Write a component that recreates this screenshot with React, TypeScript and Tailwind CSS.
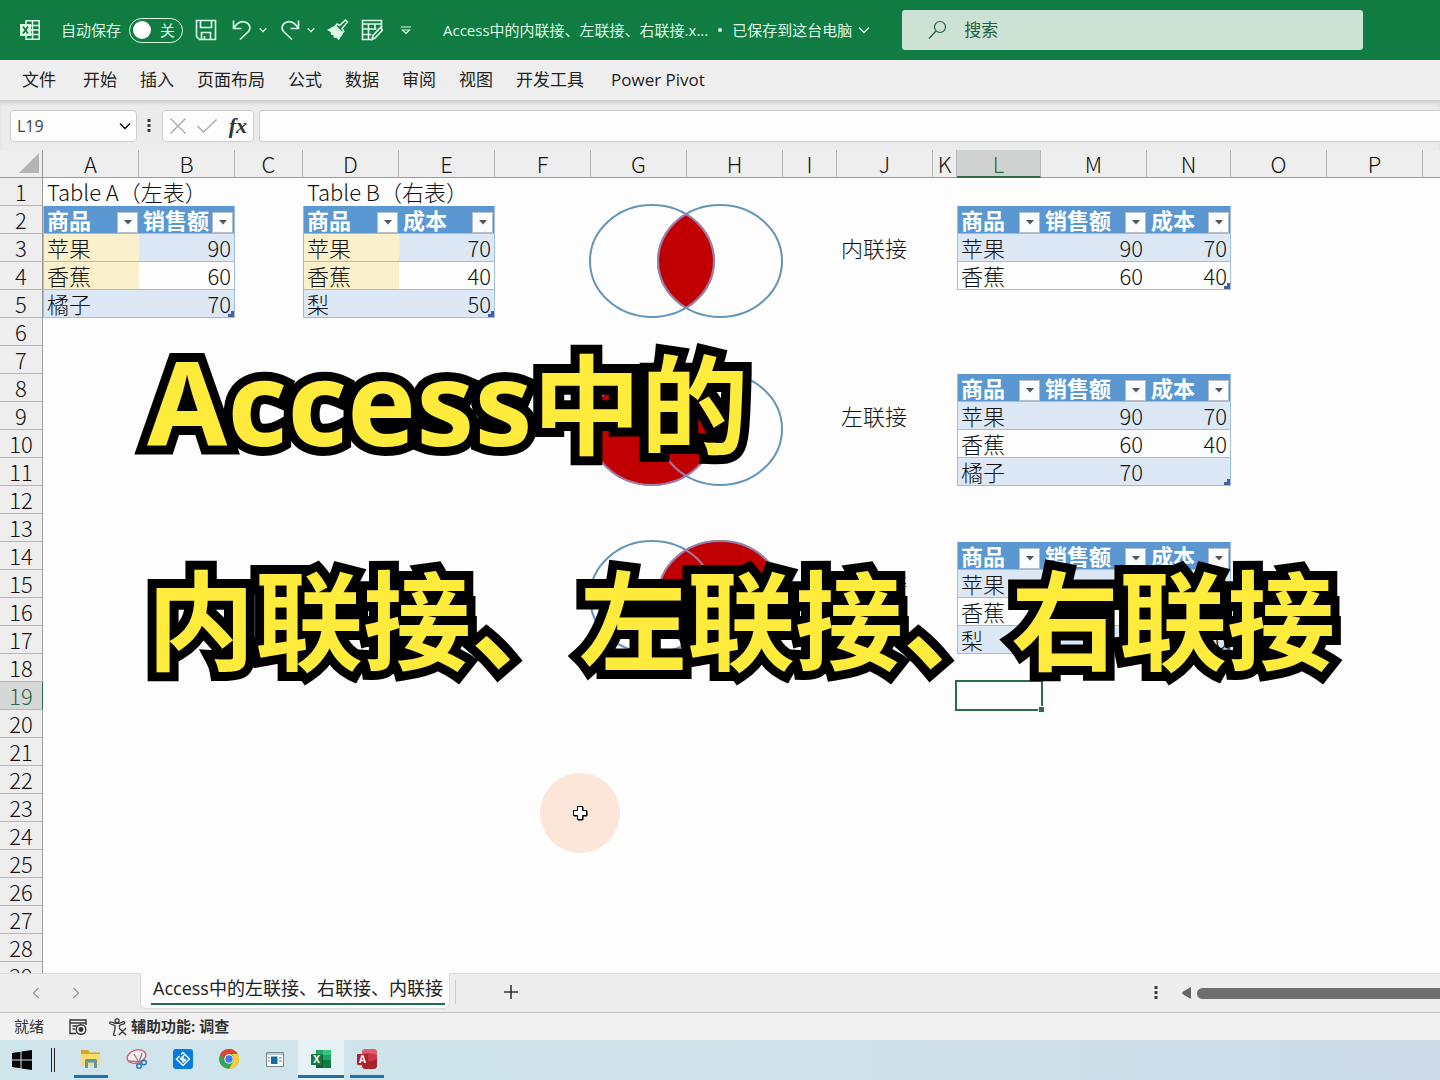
import clsx from "clsx";
import { ReactNode } from "react";

type CellKind = "text" | "head" | "band" | "plain" | "mark";

interface Cell {
  value: string;
  kind: CellKind;
  first?: boolean;
  last?: boolean;
  corner?: boolean;
}

const columns = [
  { name: "A", width: "w-[96px]" },
  { name: "B", width: "w-[96px]" },
  { name: "C", width: "w-[68px]" },
  { name: "D", width: "w-[96px]" },
  { name: "E", width: "w-[96px]" },
  { name: "F", width: "w-[96px]" },
  { name: "G", width: "w-[96px]" },
  { name: "H", width: "w-[96px]" },
  { name: "I", width: "w-[54px]" },
  { name: "J", width: "w-[96px]" },
  { name: "K", width: "w-[24px]" },
  { name: "L", width: "w-[84px]" },
  { name: "M", width: "w-[106px]" },
  { name: "N", width: "w-[84px]" },
  { name: "O", width: "w-[96px]" },
  { name: "P", width: "w-[96px]" },
  { name: "", width: "" },
];

const rowNumbers = Array.from({ length: 30 }, (_, i) => i + 1);

const cells: Record<string, Cell> = {
  A1: { value: "Table A（左表）", kind: "text" },
  D1: { value: "Table B（右表）", kind: "text" },
  J3: { value: "内联接", kind: "text" },
  J9: { value: "左联接", kind: "text" },
  J15: { value: "右联接", kind: "text" },
};

const addTable = (cols: string[], top: number, rows: string[][], marked = false) => {
  rows.forEach((row, r) => {
    row.forEach((value, c) => {
      let kind: CellKind = r === 0 ? "head" : r % 2 === 1 ? "band" : "plain";
      if (marked && c === 0 && (r === 1 || r === 2)) kind = "mark";
      cells[`${cols[c]}${top + r}`] = {
        value,
        kind,
        first: c === 0,
        last: c === row.length - 1,
        corner: c === row.length - 1 && r === rows.length - 1,
      };
    });
  });
};

addTable(["A", "B"], 2, [["商品", "销售额"], ["苹果", "90"], ["香蕉", "60"], ["橘子", "70"]], true);
addTable(["D", "E"], 2, [["商品", "成本"], ["苹果", "70"], ["香蕉", "40"], ["梨", "50"]], true);
addTable(["L", "M", "N"], 2, [["商品", "销售额", "成本"], ["苹果", "90", "70"], ["香蕉", "60", "40"]]);
addTable(["L", "M", "N"], 8, [
  ["商品", "销售额", "成本"],
  ["苹果", "90", "70"],
  ["香蕉", "60", "40"],
  ["橘子", "70", ""],
]);
addTable(["L", "M", "N"], 14, [
  ["商品", "销售额", "成本"],
  ["苹果", "90", "70"],
  ["香蕉", "60", "40"],
  ["梨", "", "50"],
]);

const menus = ["开始", "插入", "页面布局", "公式", "数据", "审阅", "视图", "开发工具"];

const Chevron = ({ className }: { className?: string }) => (
  <svg viewBox="0 0 12 8" className={className} fill="none" stroke="currentColor" strokeWidth="1.3">
    <path d="M1 1.5 6 6.5 11 1.5" />
  </svg>
);

const Dots = () => (
  <svg viewBox="0 0 4 14" className="h-3.5 w-1 shrink-0" fill="#3b3b3b">
    <rect x="0.5" y="0" width="3" height="3" />
    <rect x="0.5" y="5" width="3" height="3" />
    <rect x="0.5" y="10" width="3" height="3" />
  </svg>
);

// Two overlapping circles with the joined part filled in
const Venn = ({ join }: { join: "inner" | "left" | "right" }) => (
  <svg viewBox="0 0 196 116" className="absolute -left-1 -top-1 z-10 h-[116px] w-[196px]">
    <g fill="none" stroke="#6495b8" strokeWidth="2">
      <ellipse cx="65" cy="59" rx="62" ry="56" />
      <ellipse cx="133" cy="59" rx="62" ry="56" />
    </g>
    <g fill="#c00000" stroke="#9c7fa8" strokeWidth="2">
      {join === "left" && <ellipse cx="65" cy="59" rx="62" ry="56" />}
      {join === "right" && <ellipse cx="133" cy="59" rx="62" ry="56" />}
      {join === "inner" && <path d="M99 12.2A62 56 0 0 1 99 105.8A62 56 0 0 1 99 12.2Z" />}
      {join === "left" && <path d="M99 12.2A62 56 0 0 0 99 105.8" fill="none" />}
      {join === "right" && <path d="M99 12.2A62 56 0 0 1 99 105.8" fill="none" />}
    </g>
  </svg>
);

const venns: Record<string, "inner" | "left" | "right"> = { G2: "inner", G8: "left", G14: "right" };

const SheetCell = ({ id, cell }: { id: string; cell?: Cell }) => {
  const isNumber = cell ? /^\d+$/.test(cell.value) : false;
  return (
    <td
      className={clsx(
        "relative h-7 whitespace-nowrap pb-0.5 pt-0 leading-6",
        isNumber && "text-right",
        cell && cell.kind !== "text" && "border-b border-[#9bbfdf]",
        cell?.kind === "head" && "bg-[#5b97d1] font-bold text-white",
        cell?.kind === "band" && "bg-[#dce8f5]",
        cell?.kind === "mark" && "bg-[#fbf0cc]",
        cell?.first ? "border-l pl-[3px]" : "pl-1",
        cell?.last ? "border-r pr-[3px]" : "pr-1"
      )}
    >
      {cell?.value}
      {cell?.kind === "head" && (
        <button
          aria-label={`筛选 ${cell.value}`}
          className="absolute bottom-0 right-px flex size-[21px] items-center justify-center border border-[#b5bdc6] bg-[#fbfcfd]"
        >
          <svg viewBox="0 0 8 5" className="h-[5px] w-2" fill="#555">
            <path d="M0 0h8L4 4.5Z" />
          </svg>
        </button>
      )}
      {cell?.corner && (
        <svg viewBox="0 0 6 6" className="absolute bottom-0 right-0 size-1.5" fill="#4a5f9e">
          <path d="M3 0h3v6H0V3h3Z" />
        </svg>
      )}
      {venns[id] && <Venn join={venns[id]} />}
      {id === "L19" && (
        <div className="absolute -inset-x-0.5 -bottom-px -top-0.5 border-2 border-[#2b6b4b]">
          <span className="absolute -bottom-[3px] -right-[3px] size-1.5 border-l border-t border-white bg-[#2b6b4b]" />
        </div>
      )}
    </td>
  );
};

const Sheet = () => (
  <main className="min-h-0 flex-1 overflow-hidden bg-[#fdfdfd] font-['Noto_Sans_CJK_SC',sans-serif] text-[22px] font-light text-[#111]">
    <table className="w-full table-fixed border-separate border-spacing-0">
      <colgroup>
        <col className="w-[43px]" />
        {columns.map((c) => (
          <col key={c.name} className={c.width} />
        ))}
      </colgroup>
      <thead>
        <tr>
          <th className="relative h-7 border-b border-r border-[#9a9a9a] bg-[#eeeeee] p-0">
            <svg viewBox="0 0 20 20" className="absolute bottom-1 right-[3px] size-5" fill="#b4b4b4">
              <path d="M20 0v20H0Z" />
            </svg>
          </th>
          {columns.map((c) => (
            <th
              key={c.name}
              className={clsx(
                "h-7 px-0 pt-0 font-light leading-6",
                c.name && "border-r",
                c.name === "L"
                  ? "border-b-2 border-b-[#2b6b4b] border-r-[#b5b5b5] bg-[#d0d2d2] pb-px text-[#2b6b4b]"
                  : "border-b border-b-[#9a9a9a] border-r-[#b5b5b5] bg-[#eeeeee] pb-0.5"
              )}
            >
              {c.name}
            </th>
          ))}
        </tr>
      </thead>
      <tbody>
        {rowNumbers.map((n) => (
          <tr key={n}>
            <th
              className={clsx(
                "h-7 border-b border-r px-0 pb-0.5 pt-0 font-light leading-6",
                n === 19
                  ? "border-b-[#b5b5b5] border-r-[#2b6b4b] bg-[#d6d8d8] text-[#2b6b4b]"
                  : "border-b-[#b5b5b5] border-r-[#9a9a9a] bg-[#eeeeee]"
              )}
            >
              {n}
            </th>
            {columns.map((c) => (
              <SheetCell key={c.name} id={`${c.name}${n}`} cell={cells[`${c.name}${n}`]} />
            ))}
          </tr>
        ))}
      </tbody>
    </table>
  </main>
);

const TitleBar = () => (
  <header className="flex h-[60px] shrink-0 items-center bg-[#107c41] pl-5 text-[15px] text-[#dcfbe8]">
    <svg viewBox="0 0 20 20" className="size-5 shrink-0">
      <path d="M6 .8h13.2v18.4H6ZM6 5.4h13M6 10h13M6 14.6h13M12.5 1v18" fill="none" stroke="#dcfbe8" strokeWidth="1.5" />
      <rect y="4" width="11" height="12" fill="#dcfbe8" />
      <path d="m3 6.5 5 7M8 6.5l-5 7" stroke="#107c41" strokeWidth="1.8" />
    </svg>
    <label className="ml-[21px] flex shrink-0 items-center gap-2">
      自动保存
      <input type="checkbox" className="sr-only" />
      <span className="flex h-[25px] w-[54px] items-center justify-between rounded-full border border-current pl-[3px] pr-[7px]">
        <span className="size-[18px] rounded-full bg-white" />
        关
      </span>
    </label>
    <button aria-label="保存" className="ml-3">
      <svg viewBox="0 0 22 22" className="size-[22px]" fill="none" stroke="currentColor" strokeWidth="1.6">
        <path d="M1.5 1.5h19v19h-16l-3-3ZM5.5 1.5v7h11v-7M6.5 20.5v-7h9v7M9.5 17v3.5" />
      </svg>
    </button>
    <button aria-label="撤消" className="ml-3.5 flex items-center gap-1.5">
      <svg viewBox="0 0 22 22" className="size-[22px]" fill="none" stroke="currentColor" strokeWidth="1.6">
        <path d="M2.5 1.5v8h8M2.5 9.5C6 4 10 1.8 14 3c5 1.5 6.5 6.500 3 10L9 20.500" />
      </svg>
      <Chevron className="h-[6px] w-2 [stroke-width:2]" />
    </button>
    <button aria-label="恢复" className="ml-3 flex items-center gap-1.5">
      <svg viewBox="0 0 22 22" className="size-[22px]" fill="none" stroke="currentColor" strokeWidth="1.6">
        <path d="M19.5 1.5v8h-8M19.5 9.5C16 4 12 1.8 8 3c-5 1.5-6.500 6.500-3 10l8 7.500" />
      </svg>
      <Chevron className="h-[6px] w-2 [stroke-width:2]" />
    </button>
    <button aria-label="格式刷" className="ml-3">
      <svg viewBox="0 0 22 22" className="size-[22px]" fill="none" stroke="currentColor" strokeWidth="1.5">
        <path d="m8 6.5 7.5 7.5M10 5l2.5 1.5L18.5 1l2 2L15 9.5l1.8 2.800-2 2.200L8 7.500Z" />
        <path d="M7 8 1.500 11l3 1.500v2.500l2.500.5.500 2.500H10l1.500 2L15 15Z" fill="currentColor" />
      </svg>
    </button>
    <button aria-label="编辑表格" className="ml-3">
      <svg viewBox="0 0 22 22" className="size-[22px]" fill="none" stroke="currentColor" strokeWidth="1.6">
        <path d="M20.5 9V1.500h-19v19h9M1.500 5h19M1.500 10h14M1.500 15.500h9M7.500 5v15.500M14 5v6M11 20.500l1-4 7.500-8 2 2.500-7.500 8Z" />
      </svg>
    </button>
    <button aria-label="自定义快速访问工具栏" className="ml-[18px]">
      <svg viewBox="0 0 10 9" className="h-[9px] w-2.5" fill="none" stroke="currentColor" strokeWidth="1.2">
        <path d="M0 1h10M1.5 4 5 7.5 8.500 4Z" />
      </svg>
    </button>
    <button className="ml-8 flex shrink-0 items-center whitespace-nowrap">
      Access中的内联接、左联接、右联接.x...
      <span className="mx-2.5 size-1 rounded-full bg-current" />
      已保存到这台电脑
      <Chevron className="ml-1.5 h-2 w-3" />
    </button>
    <label className="ml-8 mr-[77px] flex h-10 flex-1 items-center gap-4 rounded-[3px] bg-[#cbe2d5] pl-[26px] text-[17px] text-[#21603f]">
      <svg viewBox="0 0 20 20" className="size-5 shrink-0" fill="none" stroke="currentColor" strokeWidth="1.2">
        <circle cx="12" cy="7" r="5.5" />
        <path d="m8 11-7 7.500" />
      </svg>
      <input
        type="search"
        aria-label="搜索"
        placeholder="搜索"
        className="min-w-0 flex-1 bg-transparent outline-none placeholder:text-[#21603f]"
      />
    </label>
  </header>
);

const FormulaBar = () => (
  <div className="flex h-[50px] shrink-0 items-center bg-[#ebebeb] pl-2.5 pt-0.5 shadow-[inset_0_4px_4px_-2px_#c4c4c4]">
    <div className="flex h-8 w-[127px] items-center rounded border border-[#cfcfcf] bg-[#fdfdfd] pl-1.5 pr-[5px]">
      <input aria-label="名称框" defaultValue="L19" className="min-w-0 flex-1 text-base text-[#444] outline-none" />
      <button aria-label="打开名称列表">
        <Chevron className="h-2 w-3" />
      </button>
    </div>
    <div className="ml-2.5 mr-[11px]">
      <Dots />
    </div>
    <div className="flex h-8 w-[92px] items-center justify-between rounded border border-[#cfcfcf] bg-[#fdfdfd] pl-[7px] pr-1.5">
      <button aria-label="取消">
        <svg viewBox="0 0 16 16" className="size-4" stroke="#a9a9a9" strokeWidth="1.3">
          <path d="m.5.5 15 15M15.500.5l-15 15" />
        </svg>
      </button>
      <button aria-label="输入">
        <svg viewBox="0 0 20 14" className="h-3.5 w-5" fill="none" stroke="#a9a9a9" strokeWidth="1.3">
          <path d="m.5 7 6 6L19.500.5" />
        </svg>
      </button>
      <button aria-label="插入函数" className="font-['Liberation_Serif',serif] text-[22px] font-bold italic leading-6 text-[#333]">
        fx
      </button>
    </div>
    <input aria-label="编辑栏" className="ml-[5px] h-8 min-w-0 flex-1 rounded-l border border-r-0 border-[#cfcfcf] bg-[#fdfdfd] px-2 outline-none" />
  </div>
);

const TabBar = () => (
  <nav className="flex h-10 shrink-0 items-start border-b border-[#c3c3c3] bg-[#ededed]">
    <div className="flex h-full flex-1 items-start border-t border-[#dcdcdc]">
      <div className="flex h-[37px] w-[140px] items-center gap-[26px] pl-[29px] text-[#9a9a9a]">
        <button aria-label="上一个工作表">
          <Chevron className="h-2 w-3.5 rotate-90" />
        </button>
        <button aria-label="下一个工作表">
          <Chevron className="h-2 w-3.5 -rotate-90" />
        </button>
      </div>
      <button className="-mt-px h-9 rounded-b-md border border-t-0 border-[#dcdcdc] bg-[#fdfdfd] pb-1 pl-2.5 pr-1">
        <span className="block whitespace-nowrap border-b-2 border-[#1f6b4a] px-0.5 text-[18px] leading-[30px] text-[#222]">
          Access中的左联接、右联接、内联接
        </span>
      </button>
      <span className="ml-[5px] mt-1.5 h-6 w-px bg-[#c8c8c8]" />
      <button aria-label="新工作表" className="ml-12 mt-[11px]">
        <svg viewBox="0 0 14 14" className="size-3.5" stroke="#333" strokeWidth="1.6">
          <path d="M7 0v14M0 7h14" />
        </svg>
      </button>
    </div>
    <div className="flex h-full w-[286px] items-center border-t border-[#dcdcdc]">
      <Dots />
      <button aria-label="向左滚动" className="ml-6">
        <svg viewBox="0 0 9 12" className="h-3 w-[9px]" fill="#666">
          <path d="M9 1v10q0 1-1 .5L.5 7Q0 6 .5 5L8 .5Q9 0 9 1Z" />
        </svg>
      </button>
      <div className="ml-1.5 h-[11px] flex-1 rounded-l-full bg-[#6e6e6e]" />
    </div>
  </nav>
);

const StatusBar = () => (
  <footer className="flex h-[27px] shrink-0 items-center bg-[#f1f1f1] pl-3.5 text-[15px] text-[#333]">
    就绪
    <svg viewBox="0 0 18 16" className="ml-[25px] h-4 w-[18px]" fill="none" stroke="#333" strokeWidth="1.4">
      <path d="M7 14.500H1V1h16v5M1 4h16M3.500 7H8M3.500 10H6" />
      <circle cx="12" cy="10.5" r="4.8" />
      <circle cx="12" cy="10.5" r="1.8" fill="#333" />
    </svg>
    <button className="ml-[22px] flex items-center gap-1 font-bold">
      <svg viewBox="0 0 18 18" className="size-[18px]" fill="none" stroke="#333" strokeWidth="1.3">
        <circle cx="8" cy="2.8" r="2" />
        <path d="M7 17c-1.500 1-3 0-2.200-1.500L6 11V7.500L1.500 6C0 5.300.8 3.300 2.500 4L6 5.300h4L14 3.800c1.600-.5 2.200 1.400.8 2L10.500 7.500v2M10 10l7 7M17 10l-7 7" />
      </svg>
      辅助功能: 调查
    </button>
  </footer>
);

const FolderIcon = () => (
  <svg viewBox="0 0 22 22" className="size-[22px]">
    <path d="M1 2h7l2 2.500h10V8H1Z" fill="#d9a520" />
    <path d="M1 6h19v12H1Z" fill="#fbdc6b" />
    <path d="M5 20v-7.500Q5 11 6.500 11h9q1.500 0 1.500 1.500V20h-3v-5.500H8V20Z" fill="#5f97a9" />
  </svg>
);

const SnipIcon = () => (
  <svg viewBox="0 0 22 22" className="size-[22px]" fill="none" strokeWidth="1.4">
    <ellipse cx="10.500" cy="8.500" rx="9.500" ry="6.500" transform="rotate(-18 10.500 8.500)" stroke="#d06068" fill="#f1edf1" />
    <path d="m8 6 6 10M16 5l-3 10M3 13l12 1" stroke="#9a8088" />
    <circle cx="13" cy="18" r="2.3" stroke="#2976b3" />
    <circle cx="18" cy="14.500" r="2.3" stroke="#2976b3" />
  </svg>
);

const BlueIcon = () => (
  <svg viewBox="0 0 20 20" className="size-5">
    <rect width="20" height="20" rx="3" fill="#087be0" />
    <g fill="none" stroke="#fff" strokeWidth="1.4">
      <path d="M8 5.500 10 3.500 16.500 10 10 16.500 3.500 10 6.500 7" />
      <path d="m7 10 4.500-4M7.500 10.500h5.500M10 8v6M13 10.500l-2 2" />
    </g>
  </svg>
);

const ChromeIcon = () => (
  <svg viewBox="0 0 20 20" className="size-5">
    <circle cx="10" cy="10" r="10" fill="#35a352" />
    <path d="M10 0a10 10 0 0 1 8.700 5H10a5 5 0 0 0-4.300 7.500L1.300 5A10 10 0 0 1 10 0Z" fill="#de4437" />
    <path d="M18.700 5A10 10 0 0 1 10 20l4.300-7.500A5 5 0 0 0 14.300 7.500L13 5Z" fill="#fbcd34" />
    <circle cx="10" cy="10" r="4.7" fill="#fff" />
    <circle cx="10" cy="10" r="3.7" fill="#3b7ded" />
  </svg>
);

const WindowIcon = () => (
  <svg viewBox="0 0 18 15" className="h-[15px] w-[18px]">
    <path d="M.5.500h17v14H.5Z" fill="#f5fafc" stroke="#7b8790" />
    <path d="M1 1h16v2H1Z" fill="#bcc7cd" />
    <rect x="5" y="4.500" width="6.500" height="7.500" fill="#126da5" />
    <path d="M2 6h2M2 9h2M13 6h3M13 9h3" stroke="#7b8790" />
  </svg>
);

// Shared shape of the Office program icons
const OfficeIcon = ({ letter }: { letter: "X" | "A" }) => (
  <svg viewBox="0 0 20 20" className="size-5">
    {letter === "X" ? (
      <>
        <path d="M5 1h15v18H5Z" fill="#21a366" />
        <path d="M12 1h8v5h-8Z" fill="#33c481" />
        <path d="M5 6h7v13H5Z" fill="#185c37" />
        <path d="M12 11h8v8h-8Z" fill="#107c41" />
        <rect y="5" width="11" height="11" rx="1" fill="#107c41" />
      </>
    ) : (
      <>
        <rect x="5" y="0" width="15" height="20" rx="4" fill="#c8384b" />
        <path d="M5 10c5 3 10 3 15 0v6q0 4-4 4H9q-4 0-4-4Z" fill="#a4262c" />
        <path d="M9 0h7q4 0 4 4v2q-6-3-15-1Q5 0 9 0Z" fill="#e25a66" />
        <rect y="5" width="11" height="11" rx="1" fill="#b1202c" />
      </>
    )}
    <text x="5.5" y="14" textAnchor="middle" fill="#fff" fontSize="10" fontWeight="700" fontFamily="Open Sans, sans-serif">
      {letter}
    </text>
  </svg>
);

const tasks: { name: string; icon: ReactNode; open?: boolean; active?: boolean }[] = [
  { name: "文件资源管理器", icon: <FolderIcon />, open: true },
  { name: "截图工具", icon: <SnipIcon /> },
  { name: "远程", icon: <BlueIcon /> },
  { name: "Chrome", icon: <ChromeIcon /> },
  { name: "录屏", icon: <WindowIcon /> },
  { name: "Excel", icon: <OfficeIcon letter="X" />, open: true, active: true },
  { name: "Access", icon: <OfficeIcon letter="A" />, open: true },
];

const TaskBar = () => (
  <div className="flex h-10 shrink-0 items-stretch bg-linear-to-r from-[#cfe5ec] via-[#cfe2ea] to-[#cddbe9]">
    <button aria-label="开始" className="flex w-11 items-center justify-center">
      <svg viewBox="0 0 20 20" className="size-5" fill="#050505">
        <path d="M0 3 8.500 1.800v7.700H0ZM9.500 1.600 20 0v9.500H9.500ZM0 10.500h8.500v7.700L0 17ZM9.500 10.500H20V20L9.500 18.400Z" />
      </svg>
    </button>
    <div className="my-2 ml-[7px] mr-[13px] w-1 border-x border-[#222]" />
    {tasks.map((task) => (
      <button
        key={task.name}
        aria-label={task.name}
        className={clsx("relative flex w-[46px] items-center justify-center pb-0.5", task.active && "bg-[#e7f2f6]")}
      >
        {task.icon}
        {task.open && (
          <span className={clsx("absolute bottom-0.5 h-[3px] bg-[#1f70ad]", task.active ? "inset-x-0" : "inset-x-[6px]")} />
        )}
      </button>
    ))}
  </div>
);

const App = () => {
  return (
    <div className="relative flex h-screen flex-col overflow-hidden bg-[#ededed] font-['Open_Sans','Noto_Sans_CJK_SC',sans-serif]">
      <TitleBar />
      <nav className="flex h-10 shrink-0 items-center gap-[23px] whitespace-nowrap bg-[#eeeeee] pl-[22px] text-[17px] text-[#222]">
        <button className="mr-1">文件</button>
        {menus.map((menu) => (
          <button key={menu}>{menu}</button>
        ))}
        <button className="ml-1">Power Pivot</button>
      </nav>
      <FormulaBar />
      <Sheet />
      <TabBar />
      <StatusBar />
      <TaskBar />

      {/* Mouse pointer with highlight */}
      <div className="pointer-events-none absolute left-[540px] top-[773px] flex size-20 items-center justify-center rounded-full bg-[#fce6d9]">
        <svg viewBox="0 0 16 16" className="size-4">
          <path d="M6 2h5v4h4v5h-4v4H6v-4H2V6h4Z" fill="#000" stroke="#000" />
          <path d="M5.500 1.500h5v4h4v5h-4v4h-5v-4h-4v-5h4Z" fill="#fff" stroke="#000" />
        </svg>
      </div>

      {/* Caption */}
      <h1 className="pointer-events-none absolute left-[147px] top-[293px] z-20 whitespace-nowrap font-['Noto_Sans','Noto_Sans_CJK_SC',sans-serif] text-[108px] font-bold leading-[216px] text-[#ffeb3b] [-webkit-text-stroke:18px_#000] [paint-order:stroke_fill]">
        <span className="text-[116px]">Access</span>中的
        <br />
        内联接、左联接、右联接
      </h1>
    </div>
  );
};

export default App;
